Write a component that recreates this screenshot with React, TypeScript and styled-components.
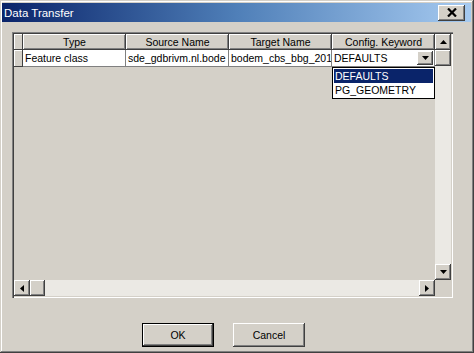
import React from 'react'
import styled, { createGlobalStyle } from 'styled-components'

const GlobalStyle = createGlobalStyle`
    html, body {
        margin: 0;
        padding: 0;
        background: #d4d0c8;
    }
    * {
        box-sizing: border-box;
    }
`

const raised = `
    box-shadow: inset -1px -1px #404040, inset 1px 1px #ffffff, inset -2px -2px #808080, inset 2px 2px #d4d0c8;
`

type Dir = 'up' | 'down' | 'left' | 'right'

const Arrow = ({ dir }: { dir: Dir }) => {
    const pts: Record<Dir, string> = {
        up: '0,4 7,4 3.5,0',
        down: '0,0 7,0 3.5,4',
        left: '4,0 4,7 0,3.5',
        right: '0,0 0,7 4,3.5',
    }
    const vertical = dir === 'up' || dir === 'down'
    return (
        <svg width={vertical ? 7 : 4} height={vertical ? 4 : 7} viewBox={vertical ? '0 0 7 4' : '0 0 4 7'}>
            <polygon points={pts[dir]} fill="#000" />
        </svg>
    )
}

const columns = ['Type', 'Source Name', 'Target Name', 'Config. Keyword']
const row = ['Feature class', 'sde_gdbrivm.nl.bode', 'bodem_cbs_bbg_201']
const keywords = ['DEFAULTS', 'PG_GEOMETRY']

const App = () => {
    return (
        <Window>
            <GlobalStyle />
            <TitleBar>
                <Title>Data Transfer</Title>
                <CloseButton>
                    <svg width="10" height="9" viewBox="0 0 10 9">
                        <path d="M1 0.5 L9 8.5 M9 0.5 L1 8.5" stroke="#000" strokeWidth="2.2" />
                    </svg>
                </CloseButton>
            </TitleBar>
            <Body>
                <Frame>
                    <Table>
                        <RowHead />
                        {columns.map((c) => (
                            <HeadCell key={c}>{c}</HeadCell>
                        ))}
                        <VScroll>
                            <ScrollButton><Arrow dir="up" /></ScrollButton>
                            <ScrollThumb $vertical />
                            <Track />
                            <ScrollButton><Arrow dir="down" /></ScrollButton>
                        </VScroll>
                        <RowHead />
                        {row.map((v, i) => (
                            <Cell key={i}>{v}</Cell>
                        ))}
                        <ComboCell>
                            <ComboText>DEFAULTS</ComboText>
                            <ComboButton><Arrow dir="down" /></ComboButton>
                        </ComboCell>
                        <Empty />
                        <HScroll>
                            <ScrollButton><Arrow dir="left" /></ScrollButton>
                            <ScrollThumb />
                            <Track />
                            <ScrollButton><Arrow dir="right" /></ScrollButton>
                        </HScroll>
                        <Corner />
                        <DropList>
                            {keywords.map((k, i) => (
                                <DropItem key={k} $selected={i === 0}>{k}</DropItem>
                            ))}
                        </DropList>
                    </Table>
                </Frame>
                <Buttons>
                    <Button $default>OK</Button>
                    <Button>Cancel</Button>
                </Buttons>
            </Body>
        </Window>
    )
}

const Window = styled.div`
    width: 474px;
    height: 353px;
    display: flex;
    flex-direction: column;
    padding: 3px 3px 3px 2px;
    background: #d4d0c8;
    box-shadow: inset -1px -1px #404040, inset 1px 1px #d4d0c8, inset -2px -2px #808080, inset 2px 2px #ffffff;
    font-family: "Liberation Sans", Arial, sans-serif;
    font-size: 10.5px;
    color: #000;
`

const TitleBar = styled.div`
    height: 19px;
    display: flex;
    align-items: center;
    justify-content: space-between;
    padding: 0 6px 0 2px;
    background: linear-gradient(to right, #0a246a, #4f7fb8 50%, #a6caf0);
`

const Title = styled.span`
    color: #fff;
    font-size: 11.5px;
`

const CloseButton = styled.div`
    width: 27px;
    height: 16px;
    display: flex;
    align-items: center;
    justify-content: center;
    background: #d4d0c8;
    ${raised}
`

const Body = styled.div`
    flex: 1;
    display: flex;
    flex-direction: column;
    padding: 10px 18px 0 10px;
`

const Frame = styled.div`
    width: 441px;
    height: 266px;
    padding: 2px;
    box-shadow: inset 1px 1px #808080, inset 2px 2px #404040, inset -1px -1px #ffffff, inset -2px -2px #d4d0c8;
`

const Table = styled.div`
    position: relative;
    display: grid;
    grid-template-columns: 9px repeat(4, 103px) 16px;
    grid-template-rows: 16px 17px 1fr 16px;
    height: 100%;
`

const RowHead = styled.div`
    background: #d4d0c8;
    box-shadow: inset -1px -1px #404040, inset 1px 1px #ffffff;
`

const HeadCell = styled.div`
    display: flex;
    align-items: center;
    justify-content: center;
    background: #d4d0c8;
    box-shadow: inset -1px -1px #404040, inset 1px 1px #ffffff, inset -2px -2px #808080;
`

const Cell = styled.div`
    display: flex;
    align-items: center;
    padding: 0 2px;
    background: #fff;
    border-right: 1px solid #808080;
    border-bottom: 1px solid #808080;
    white-space: nowrap;
    overflow: hidden;
`

const ComboCell = styled(Cell)`
    padding: 0 1px 0 2px;
    justify-content: space-between;
`

const ComboText = styled.span``

const ComboButton = styled.div`
    width: 16px;
    height: 14px;
    display: flex;
    align-items: center;
    justify-content: center;
    background: #d4d0c8;
    ${raised}
`

const Empty = styled.div`
    grid-column: 1 / 6;
    background: #d4d0c8;
`

const VScroll = styled.div`
    grid-column: 6;
    grid-row: 1 / 4;
    display: flex;
    flex-direction: column;
`

const HScroll = styled.div`
    grid-column: 1 / 6;
    display: flex;
`

const ScrollButton = styled.div`
    width: 16px;
    height: 16px;
    flex: none;
    display: flex;
    align-items: center;
    justify-content: center;
    background: #d4d0c8;
    ${raised}
`

const ScrollThumb = styled.div<{ $vertical?: boolean }>`
    flex: none;
    width: ${(p) => (p.$vertical ? '16px' : '15px')};
    height: 16px;
    background: #d4d0c8;
    ${raised}
`

const Track = styled.div`
    flex: 1;
    background: #ebe9e4;
`

const Corner = styled.div`
    background: #d4d0c8;
`

const DropList = styled.div`
    position: absolute;
    left: 318px;
    top: 33px;
    width: 103px;
    padding: 1px;
    border: 1px solid #000;
    background: #fff;
`

const DropItem = styled.div<{ $selected?: boolean }>`
    height: 14px;
    line-height: 14px;
    padding: 0 1px;
    background: ${(p) => (p.$selected ? '#0a246a' : '#fff')};
    color: ${(p) => (p.$selected ? '#fff' : '#000')};
`

const Buttons = styled.div`
    display: flex;
    justify-content: center;
    gap: 19px;
    margin-top: 25px;
    padding-right: 18px;
`

const Button = styled.div<{ $default?: boolean }>`
    width: 72px;
    height: 24px;
    display: flex;
    align-items: center;
    justify-content: center;
    background: #d4d0c8;
    ${(p) =>
        p.$default
            ? 'box-shadow: inset 0 0 0 1px #000, inset -2px -2px #404040, inset 2px 2px #ffffff, inset -3px -3px #808080;'
            : raised}
`

export default App
